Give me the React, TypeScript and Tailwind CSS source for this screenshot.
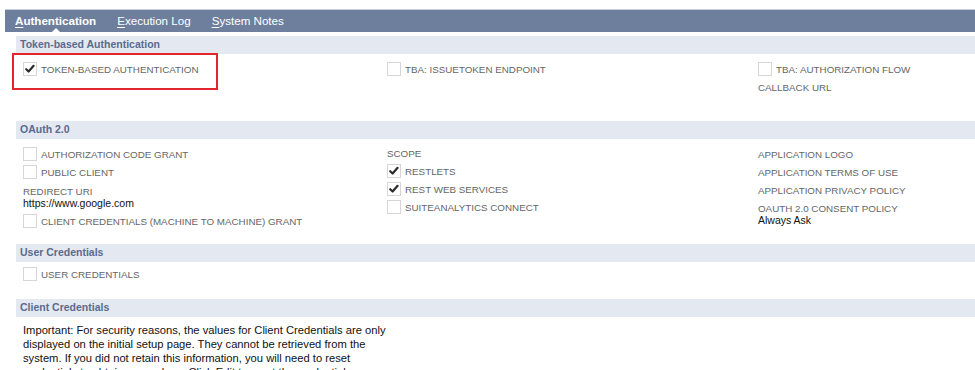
import React from "react";

const Box = ({ checked }: { checked?: boolean }) => (
  <svg width="14" height="14" viewBox="0 0 14 14" className="shrink-0">
    <rect x="0.5" y="0.5" width="13" height="13" fill="#fff" stroke="#d6d6d6" />
    {checked && (
      <path d="M3.2 7.2 L5.6 9.5 L10.6 3.8" fill="none" stroke="#2b2b2b" strokeWidth="2.2" strokeLinecap="round" strokeLinejoin="round" />
    )}
  </svg>
);

const Check = ({ label, checked }: { label: string; checked?: boolean }) => (
  <div className="flex h-[18px] items-center gap-[4px]">
    <div className="-mt-[3px]">
      <Box checked={checked} />
    </div>
    <span className="text-[9.8px] text-[#666] uppercase">{label}</span>
  </div>
);

const Label = ({ children, cls = "" }: { children: React.ReactNode; cls?: string }) => (
  <div className={"flex items-center text-[9.8px] text-[#666] " + cls}>{children}</div>
);

const Value = ({ children, cls = "" }: { children: React.ReactNode; cls?: string }) => (
  <div className={"flex items-center text-[10.5px] text-[#111] " + cls}>{children}</div>
);

const Header = ({ title }: { title: string }) => (
  <div className="flex h-[18px] items-center bg-[#e4e8f0] pl-[4px] text-[10.5px] font-bold text-[#5a6b8e]">
    {title}
  </div>
);

export default function App() {
  return (
    <div
      className="relative h-[370px] w-[975px] overflow-hidden bg-white"
      style={{ fontFamily: '"Liberation Sans", Arial, sans-serif' }}
    >
      <div className="pl-[5px] pt-[9px]">
        <div className="border-t border-[#c9cfda]">
          <div className="relative flex h-[22px] items-center gap-[21px] bg-[#6e7f9e] pl-[10px] text-[11.6px] text-white">
            <span className="relative font-bold">
              <span className="underline underline-offset-2">A</span>uthentication
              <span className="absolute left-[36px] top-[16px] h-0 w-0 border-x-[5px] border-b-[5px] border-x-transparent border-b-white" />
            </span>
            <span>
              <span className="underline underline-offset-2">E</span>xecution Log
            </span>
            <span>
              <span className="underline underline-offset-2">S</span>ystem Notes
            </span>
          </div>
        </div>
      </div>

      <div className="pl-[16px] pt-[4px]">
        <Header title="Token-based Authentication" />
        <div className="mb-[24px] mt-[7px] grid grid-cols-[364px_371px_1fr] pl-[7px]">
          <div>
            <Check label="Token-based Authentication" checked />
          </div>
          <div>
            <Check label="TBA: IssueToken Endpoint" />
          </div>
          <div>
            <Check label="TBA: Authorization Flow" />
            <Label cls="h-[18px]">CALLBACK URL</Label>
          </div>
        </div>

        <Header title="OAuth 2.0" />
        <div className="mt-[7px] grid grid-cols-[364px_371px_1fr] pl-[7px]">
          <div>
            <Check label="Authorization Code Grant" />
            <Check label="Public Client" />
            <Label cls="mt-[4px] h-[12px]">REDIRECT URI</Label>
            <Value cls="h-[12px]">https://www.google.com</Value>
            <div className="mt-[3px]">
              <Check label="Client Credentials (Machine to Machine) Grant" />
            </div>
          </div>
          <div>
            <Label cls="h-[17px]">SCOPE</Label>
            <Check label="RESTlets" checked />
            <Check label="REST Web Services" checked />
            <Check label="SuiteAnalytics Connect" />
          </div>
          <div>
            <Label cls="h-[18px]">APPLICATION LOGO</Label>
            <Label cls="h-[18px]">APPLICATION TERMS OF USE</Label>
            <Label cls="h-[18px]">APPLICATION PRIVACY POLICY</Label>
            <Label cls="mt-[3px] h-[12px]">OAUTH 2.0 CONSENT POLICY</Label>
            <Value cls="h-[12px]">Always Ask</Value>
          </div>
        </div>

        <div className="mt-[13px]">
          <Header title="User Credentials" />
        </div>
        <div className="mt-[4px] pl-[7px]">
          <Check label="User Credentials" />
        </div>

        <div className="mt-[15px]">
          <Header title="Client Credentials" />
        </div>
        <p className="mt-[6px] whitespace-nowrap pl-[7px] text-[11.2px] leading-[14px] text-[#111]">
          Important: For security reasons, the values for Client Credentials are only
          <br />
          displayed on the initial setup page. They cannot be retrieved from the
          <br />
          system. If you did not retain this information, you will need to reset
          <br />
          credentials to obtain new values. Click Edit to reset the credentials.
        </p>
      </div>

      <div className="absolute left-[12px] top-[53px] h-[37px] w-[206px] border-2 border-[#e3262e]" />
    </div>
  );
}
